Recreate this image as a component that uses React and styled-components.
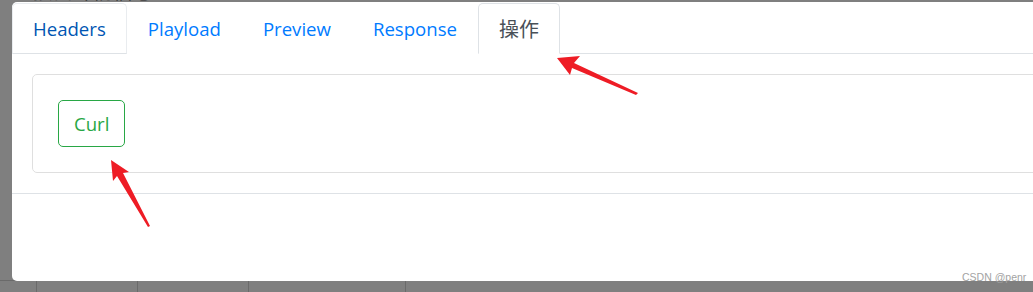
import React from "react";
import styled, { createGlobalStyle } from "styled-components";

const GlobalStyle = createGlobalStyle`
  html, body {
    margin: 0;
    padding: 0;
    overflow: hidden;
  }
  body {
    font-family: "Open Sans", "Noto Sans", "Noto Sans CJK SC", sans-serif;
    background: #7f7f7f;
  }
`;

const tabs = ["Headers", "Playload", "Preview", "Response", "操作"];

export default function App() {
  return (
    <>
      <GlobalStyle />
      <Page>
        <PageTitle>接口详情信息</PageTitle>
        <Spacer />
        <TableRow>
          <Cell width={37} />
          <Cell width={101} />
          <Cell width={111} />
          <Cell width={157} />
          <Cell width={640} />
        </TableRow>

        <Modal>
          <NavTabs>
            {tabs.map((t, i) => (
              <TabLink
                key={t}
                active={i === 4}
                hover={i === 0}
                cjk={i === 4}
              >
                {t}
              </TabLink>
            ))}
          </NavTabs>
          <TabBody>
            <Card>
              <CurlButton>Curl</CurlButton>
            </Card>
          </TabBody>
          <Footer />
        </Modal>

        <Watermark>CSDN @penr</Watermark>

        <Arrows viewBox="0 0 1033 292" width="1033" height="292">
          <polygon
            fill="#ee1c25"
            points="557,58 580,56 574,63 638,93 636,95 572,68 570,75"
          />
          <polygon
            fill="#ee1c25"
            points="111,160 129,172 123,173 150,226 148,227 117,176 113,181"
          />
        </Arrows>
      </Page>
    </>
  );
}

const Page = styled.div`
  position: relative;
  width: 1033px;
  height: 292px;
  display: flex;
  flex-direction: column;
  overflow: hidden;
`;

const PageTitle = styled.div`
  margin-top: -22px;
  padding-left: 33px;
  font-size: 20px;
  line-height: 26px;
  color: #2a2a2a;
  font-family: "Noto Sans CJK SC", sans-serif;
`;

const Spacer = styled.div`
  flex: 1;
`;

const TableRow = styled.div`
  display: flex;
  height: 11px;
  border-top: 1px solid #6a6a6a;
`;

const Cell = styled.div`
  width: ${(p) => p.width}px;
  flex-shrink: 0;
  border-right: 1px solid #6a6a6a;
  box-sizing: border-box;
`;

const Modal = styled.div`
  position: absolute;
  left: 12px;
  top: 2px;
  width: 1120px;
  height: 279px;
  background: #fff;
  border-radius: 5px;
  display: flex;
  flex-direction: column;
  overflow: hidden;
`;

const NavTabs = styled.div`
  display: flex;
  margin-top: 1px;
  border-bottom: 1px solid #dee2e6;
`;

const TabLink = styled.a`
  display: block;
  padding: 10px 20px 9px;
  margin-bottom: -1px;
  font-size: ${(p) => (p.cjk ? "20px" : "18.6px")};
  line-height: 30px;
  font-family: ${(p) =>
    p.cjk
      ? `"Noto Sans CJK SC", sans-serif`
      : `"Open Sans", "Noto Sans", sans-serif`};
  color: ${(p) => (p.active ? "#495057" : p.hover ? "#0056b3" : "#007bff")};
  background: #fff;
  border: 1px solid
    ${(p) => (p.active ? "#dee2e6" : p.hover ? "#e9ecef" : "transparent")};
  border-bottom-color: ${(p) =>
    p.active ? "#fff" : p.hover ? "#dee2e6" : "transparent"};
  border-top-left-radius: 5px;
  border-top-right-radius: 5px;
  cursor: pointer;
`;

const TabBody = styled.div`
  padding: 20px;
`;

const Card = styled.div`
  border: 1px solid #dfdfdf;
  border-radius: 5px;
  padding: 25px;
  display: flex;
`;

const CurlButton = styled.button`
  font-family: "Open Sans", "Noto Sans", sans-serif;
  font-size: 18.6px;
  line-height: 30px;
  padding: 7.5px 15px;
  color: #28a745;
  background: #fff;
  border: 1px solid #28a745;
  border-radius: 5px;
  cursor: pointer;
`;

const Footer = styled.div`
  border-top: 1px solid #dee2e6;
  flex: 1;
`;

const Watermark = styled.div`
  position: absolute;
  left: 962px;
  top: 271px;
  font-family: "Liberation Sans", Arial, sans-serif;
  font-size: 10.5px;
  color: #a3a3a3;
`;

const Arrows = styled.svg`
  position: absolute;
  left: 0;
  top: 0;
  pointer-events: none;
`;
